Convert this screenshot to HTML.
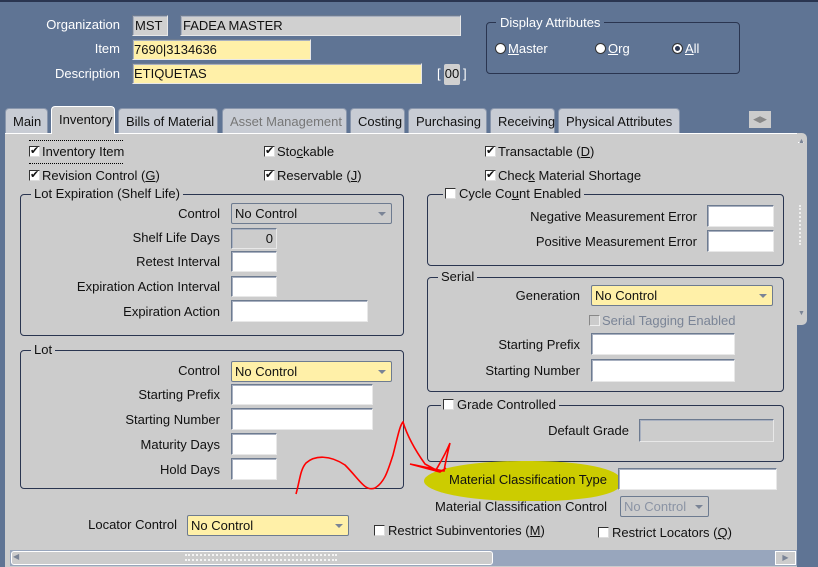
<!DOCTYPE html>
<html><head><meta charset="utf-8"><style>
*{margin:0;padding:0;box-sizing:border-box}
body{width:818px;height:567px;overflow:hidden;background:#5f7494;font-family:"Liberation Sans",sans-serif;font-size:13px;color:#111;position:relative}
div,span{position:absolute}
.l{white-space:nowrap;line-height:16px;text-align:right}
.t{white-space:nowrap;line-height:16px}
.w{color:#fff}
.f{background:#fff;border:1px solid #6d7b90;border-right-color:#e8e8e8;border-bottom-color:#e8e8e8;box-shadow:inset 1px 1px 0 #a8b0c0}
.y{background:#fff0a8}
.g{background:#d0d0d0}
.sel{border:1px solid #6d7b90;border-radius:2px;line-height:19px;padding-left:3px;white-space:nowrap}
.sel:after{content:"";position:absolute;right:5px;top:8px;border:4px solid transparent;border-top:4px solid #7a8496;border-bottom:0}
.grp{border:1px solid #2a3550;border-radius:4px}
.gt{background:#ccc;padding:0 3px;line-height:14px;white-space:nowrap}
.cb{width:11px;height:11px;background:#fff;border:1px solid #333;border-right-color:#ddd;border-bottom-color:#ddd}
.ck:after{content:"✔";position:absolute;left:0;top:-3px;font-size:11px;color:#111;font-family:"DejaVu Sans",sans-serif}
.tab{top:108px;height:25px;background:#c8ccd4;border:1px solid #8a97ad;border-bottom:none;border-radius:4px 4px 0 0;line-height:26px;padding-left:7px;white-space:nowrap;color:#111}
.rad{width:11px;height:11px;border-radius:50%;background:#fff;border:1px solid #333}
</style></head><body>
<div style="left:0;top:0;width:818px;height:2px;background:#2a3550"></div>
<div class="l w" style="right:698px;top:17px">Organization</div>
<div class="g f" style="left:132px;top:15px;width:36px;height:21px;background:#d0d0d0;padding-left:2px;line-height:19px">MST</div>
<div class="g f" style="left:180px;top:15px;width:281px;height:21px;background:#d0d0d0;padding-left:2px;line-height:19px">FADEA MASTER</div>
<div class="l w" style="right:698px;top:41px">Item</div>
<div class="f y" style="left:132px;top:39px;width:179px;height:21px;padding-left:1px;line-height:19px;background:#fff0a8">7690|3134636</div>
<div class="l w" style="right:698px;top:66px">Description</div>
<div class="f y" style="left:132px;top:63px;width:290px;height:21px;padding-left:1px;line-height:19px;background:#fff0a8">ETIQUETAS</div>
<div class="t w" style="left:437px;top:66px">[</div>
<div class="g" style="left:444px;top:64px;width:16px;height:21px;line-height:20px;text-align:center;background:#d0d0d0;border-radius:2px">00</div>
<div class="t w" style="left:463px;top:66px">]</div>
<div class="grp" style="left:486px;top:22px;width:254px;height:52px;border-color:#2a3550"></div>
<div class="t w" style="left:496px;top:15px;background:#5f7494;padding:0 4px">Display Attributes</div>
<div class="rad" style="left:495px;top:43px"></div><div class="t w" style="left:508px;top:41px"><u>M</u>aster</div>
<div class="rad" style="left:595px;top:43px"></div><div class="t w" style="left:608px;top:41px"><u>O</u>rg</div>
<div class="rad" style="left:672px;top:43px;background:#2a3550;box-shadow:inset 0 0 0 2px #fff"></div><div class="t w" style="left:685px;top:41px"><u>A</u>ll</div>

<!-- panel -->
<div style="left:5px;top:133px;width:792px;height:434px;background:#ccc"></div>
<div style="left:797px;top:133px;width:10px;height:192px;background:#ccc;border-radius:0 5px 5px 0"></div>
<div style="left:5px;top:133px;width:792px;height:1px;background:#fff"></div>
<div style="left:798px;top:140px;width:6px;height:3px;border-bottom:1px solid #fff;color:#7a8496;font-size:7px;line-height:3px">▲</div>
<div style="left:798px;top:310px;width:6px;font-size:7px;color:#7a8496">▼</div>
<div style="left:799px;top:205px;width:4px;height:40px;border-left:2px dotted #eee"></div>
<!-- tabs -->
<div class="tab" style="left:5px;width:43px">Main</div>
<div class="tab" style="left:51px;width:64px;top:106px;height:28px;background:#ccc;border-color:#fff">Inventory</div>
<div class="tab" style="left:118px;width:100px">Bills of Material</div>
<div class="tab" style="left:222px;width:125px;color:#777">Asset Management</div>
<div class="tab" style="left:350px;width:55px">Costing</div>
<div class="tab" style="left:408px;width:79px">Purchasing</div>
<div class="tab" style="left:490px;width:65px">Receiving</div>
<div class="tab" style="left:558px;width:122px">Physical Attributes</div>
<div style="left:749px;top:111px;width:22px;height:17px;background:#ccc;color:#888;font-size:9px;line-height:17px;text-align:center">◀▶</div>

<!-- top checkboxes -->
<div style="left:29px;top:140px;width:94px;height:24px;border-top:1px dotted #000;border-bottom:1px dotted #000"></div>
<div class="cb ck" style="left:29px;top:146px"></div><div class="t" style="left:42px;top:144px">Inventory Item</div>
<div class="cb ck" style="left:264px;top:146px"></div><div class="t" style="left:277px;top:144px">Sto<u>c</u>kable</div>
<div class="cb ck" style="left:485px;top:146px"></div><div class="t" style="left:498px;top:144px">Transactable (<u>D</u>)</div>
<div class="cb ck" style="left:29px;top:170px"></div><div class="t" style="left:42px;top:168px">Revision Control (<u>G</u>)</div>
<div class="cb ck" style="left:264px;top:170px"></div><div class="t" style="left:277px;top:168px">Reservable (<u>J</u>)</div>
<div class="cb ck" style="left:485px;top:170px"></div><div class="t" style="left:498px;top:168px">Chec<u>k</u> Material Shortage</div>

<!-- Lot expiration -->
<div class="grp" style="left:20px;top:194px;width:384px;height:142px"></div>
<div class="gt" style="left:31px;top:187px">Lot Expiration (Shelf Life)</div>
<div class="l" style="right:598px;top:206px">Control</div>
<div class="sel" style="left:231px;top:203px;width:161px;height:21px;background:#ccc">No Control</div>
<div class="l" style="right:598px;top:230px">Shelf Life Days</div>
<div class="f" style="left:231px;top:228px;width:46px;height:21px;background:#ccc;text-align:right;padding-right:3px;line-height:19px">0</div>
<div class="l" style="right:598px;top:254px">Retest Interval</div>
<div class="f" style="left:231px;top:251px;width:46px;height:21px"></div>
<div class="l" style="right:598px;top:279px">Expiration Action Interval</div>
<div class="f" style="left:231px;top:276px;width:46px;height:21px"></div>
<div class="l" style="right:598px;top:304px">Expiration Action</div>
<div class="f" style="left:231px;top:300px;width:137px;height:22px"></div>

<!-- Lot -->
<div class="grp" style="left:20px;top:350px;width:384px;height:139px"></div>
<div class="gt" style="left:31px;top:343px">Lot</div>
<div class="l" style="right:598px;top:363px">Control</div>
<div class="sel" style="left:231px;top:361px;width:161px;height:21px;background:#fff0a8">No Control</div>
<div class="l" style="right:598px;top:387px">Starting Prefix</div>
<div class="f" style="left:231px;top:384px;width:142px;height:21px"></div>
<div class="l" style="right:598px;top:412px">Starting Number</div>
<div class="f" style="left:231px;top:408px;width:142px;height:22px"></div>
<div class="l" style="right:598px;top:437px">Maturity Days</div>
<div class="f" style="left:231px;top:433px;width:46px;height:22px"></div>
<div class="l" style="right:598px;top:462px">Hold Days</div>
<div class="f" style="left:231px;top:458px;width:46px;height:22px"></div>

<!-- Cycle count -->
<div class="grp" style="left:427px;top:194px;width:357px;height:72px"></div>
<div class="gt" style="left:443px;top:187px;padding-left:16px">Cycle Co<u>u</u>nt Enabled</div>
<div class="cb" style="left:445px;top:188px"></div>
<div class="l" style="right:121px;top:209px">Negative Measurement Error</div>
<div class="f" style="left:707px;top:205px;width:67px;height:22px"></div>
<div class="l" style="right:121px;top:234px">Positive Measurement Error</div>
<div class="f" style="left:707px;top:230px;width:67px;height:22px"></div>

<!-- Serial -->
<div class="grp" style="left:427px;top:277px;width:357px;height:115px"></div>
<div class="gt" style="left:438px;top:270px">Serial</div>
<div class="l" style="right:238px;top:288px">Generation</div>
<div class="sel" style="left:591px;top:285px;width:182px;height:21px;background:#fff0a8">No Control</div>
<div class="cb" style="left:589px;top:315px;background:#ccc;border-color:#888 #eee #eee #888"></div>
<div class="t" style="left:602px;top:313px;color:#7a8496">Serial Tagging Enabled</div>
<div class="l" style="right:238px;top:337px">Starting Prefix</div>
<div class="f" style="left:591px;top:333px;width:144px;height:22px"></div>
<div class="l" style="right:238px;top:363px">Starting Number</div>
<div class="f" style="left:591px;top:359px;width:144px;height:23px"></div>

<!-- Grade -->
<div class="grp" style="left:427px;top:405px;width:357px;height:57px"></div>
<div class="gt" style="left:441px;top:398px;padding-left:16px">Grade Controlled</div>
<div class="cb" style="left:443px;top:399px"></div>
<div class="l" style="right:189px;top:423px">Default Grade</div>
<div class="f" style="left:639px;top:419px;width:135px;height:23px;background:#ccc"></div>

<!-- highlight -->
<div style="left:424px;top:461px;width:196px;height:40px;background:#cccc00;border-radius:50% 45% 40% 50%"></div>
<div class="l" style="right:211px;top:472px">Material Classification Type</div>
<div class="f" style="left:618px;top:468px;width:159px;height:22px"></div>
<div class="l" style="right:211px;top:499px">Material Classification Control</div>
<div class="sel" style="left:620px;top:496px;width:89px;height:21px;background:#ccc;color:#8a93a4">No Control</div>

<div class="l" style="right:641px;top:517px">Locator Control</div>
<div class="sel" style="left:187px;top:515px;width:162px;height:21px;background:#fff0a8">No Control</div>
<div class="cb" style="left:374px;top:525px"></div><div class="t" style="left:388px;top:523px">Restrict Subinventories (<u>M</u>)</div>
<div class="cb" style="left:598px;top:527px"></div><div class="t" style="left:612px;top:525px">Restrict Locators (<u>Q</u>)</div>

<!-- bottom scrollbar -->
<div style="left:10px;top:550px;width:787px;height:16px;background:#98a6bd"></div>
<div style="left:11px;top:551px;width:482px;height:14px;background:#ccc;border:1px solid #fff;border-radius:3px"></div>
<div style="left:185px;top:554px;width:152px;height:7px;border-top:2px dotted #f4f4f4;border-bottom:2px dotted #f4f4f4"></div>
<div style="left:13px;top:552px;font-size:8px;color:#7a8496">◀</div>
<div style="left:775px;top:551px;width:21px;height:14px;background:#ccc;border:1px solid #fff;font-size:8px;color:#7a8496;line-height:12px;text-align:center">▶</div>

<svg style="position:absolute;left:0;top:0" width="818" height="567">
<path d="M296,494 C300,480 300,470 306,463 C315,455 330,455 345,465 C360,480 365,492 375,488 C385,482 388,470 393,455 C398,435 400,425 403,422 C407,435 415,450 425,464 L436,470 C440,463 445,455 450,443 C447,455 445,465 444,471 C438,470 420,466 410,464 L440,472 L446,468" fill="none" stroke="#f00" stroke-width="1.6"/>
</svg>
</body></html>
